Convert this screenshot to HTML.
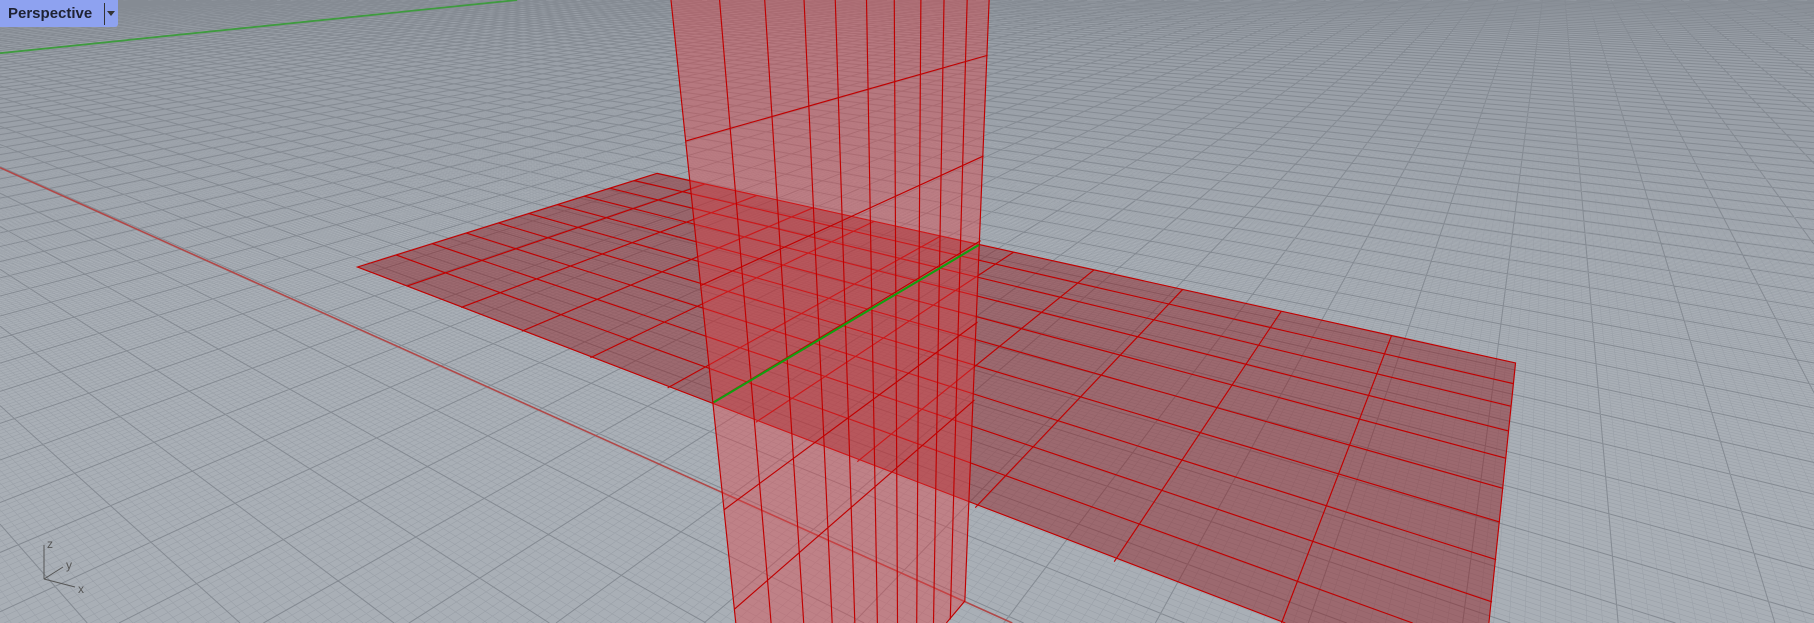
<!DOCTYPE html>
<html><head><meta charset="utf-8"><style>
html,body{margin:0;padding:0;width:1814px;height:623px;overflow:hidden;background:#aab0b7;position:relative}
svg{display:block}
#v{position:absolute;left:0;top:0}
#lab{position:absolute;left:0;top:0;width:118px;height:27px;background:#8ea2f0;border-bottom-right-radius:3px;font-family:"Liberation Sans",sans-serif;font-weight:bold;font-size:15px;color:#1e2233;line-height:27px;overflow:hidden}
#lab span{position:absolute;left:8px;top:0}
#lab i{position:absolute;left:104px;top:3px;width:1px;height:22px;background:#333}
#lab b{position:absolute;left:107px;top:11px;width:0;height:0;border-left:4px solid transparent;border-right:4px solid transparent;border-top:5px solid #333}
</style></head><body>
<svg id="v" width="1814" height="623" viewBox="0 0 1568 539" preserveAspectRatio="none" xmlns="http://www.w3.org/2000/svg" overflow="hidden">
<rect width="1568" height="539" fill="#a9afb6"/>
<path id="gmin" fill="none" stroke="#9aa0a8" stroke-width="0.5"/>
<path id="gmaj" fill="none" stroke="#858b93" stroke-width="0.9"/>
<line x1="0" y1="145" x2="875" y2="539" stroke="#b04848" stroke-width="1.4"/>
<line x1="0" y1="46" x2="447" y2="0" stroke="#3f9a3f" stroke-width="1.6"/>
<polygon points="309,231 568,150 1310,314 1287,539 1111,539" fill="rgb(140,20,25)" fill-opacity="0.45"/>
<polyline points="1111,539 309,231 568,150 1310,314 1287,539" fill="none" stroke="#c00000" stroke-width="1"/>
<path id="pgrid" fill="none" stroke="#c00000" stroke-width="1"/>
<polygon points="580,0 855,0 834,520 818,539 636,539" fill="rgb(225,60,65)" fill-opacity="0.4"/>
<polyline points="580,0 636,539" fill="none" stroke="#c00000" stroke-width="1"/>
<polyline points="855,0 834,520 818,539" fill="none" stroke="#c00000" stroke-width="1"/>
<path id="sgrid" fill="none" stroke="#c00000" stroke-width="1"/>
<line x1="617" y1="348" x2="846" y2="212" stroke="#10a010" stroke-width="1.8"/>
</svg>
<svg style="position:absolute;left:0;top:0" width="1814" height="623" xmlns="http://www.w3.org/2000/svg" overflow="hidden">
<g stroke="#555" stroke-width="1" fill="none">
<line x1="44" y1="545" x2="44" y2="579"/><line x1="44" y1="579" x2="75" y2="587"/><line x1="44" y1="579" x2="63" y2="567"/>
</g>
<g font-family="Liberation Sans,sans-serif" font-size="12" fill="#555">
<text x="47" y="548">z</text><text x="66" y="569">y</text><text x="78" y="593">x</text>
</g>
</svg>
<div id="lab"><span>Perspective</span><i></i><b></b></div>
<script>
function clipSeg(p,q,xmin,ymin,xmax,ymax){
 var t0=0,t1=1,dx=q[0]-p[0],dy=q[1]-p[1];
 var P=[-dx,dx,-dy,dy],Qv=[p[0]-xmin,xmax-p[0],p[1]-ymin,ymax-p[1]];
 for(var i=0;i<4;i++){if(P[i]==0){if(Qv[i]<0)return"";}else{var r=Qv[i]/P[i];if(P[i]<0){if(r>t1)return"";if(r>t0)t0=r;}else{if(r<t0)return"";if(r<t1)t1=r;}}}
 return"M"+(p[0]+t0*dx).toFixed(1)+" "+(p[1]+t0*dy).toFixed(1)+"L"+(p[0]+t1*dx).toFixed(1)+" "+(p[1]+t1*dy).toFixed(1);}
function scr(p,q){return clipSeg(p,q,0,0,1568,539);}
var VA=[-450,-57],VB=[1345,-92],O=[-179,64];
function ray(P,Q){var dx=Q[0]-P[0],dy=Q[1]-P[1],l=Math.hypot(dx,dy);if(l<1e-6)return"";var k=5000/l;return scr(P,[P[0]+dx*k,P[1]+dy*k]);}
var mn=[],mj=[],st=0.015,n=10;
for(var i=-700;i<=2000;i++){var t=i*st/n;if(t<=-0.995)continue;
 var Q=[(O[0]+t*VA[0])/(1+t),(O[1]+t*VA[1])/(1+t)];
 (i%n==0?mj:mn).push(ray(VB,Q));
 var R=[(O[0]+t*VB[0])/(1+t),(O[1]+t*VB[1])/(1+t)];
 (i%n==0?mj:mn).push(ray(VA,R));}
document.getElementById('gmin').setAttribute('d',mn.join(''));
document.getElementById('gmaj').setAttribute('d',mj.join(''));
var A=[309,231],B=[568,150],C=[1310,314],D=[1281,610];
var x0=A[0],y0=A[1],x1=B[0],y1=B[1],x2=C[0],y2=C[1],x3=D[0],y3=D[1];
var dx1=x1-x2,dx2=x3-x2,dx3=x0-x1+x2-x3,dy1=y1-y2,dy2=y3-y2,dy3=y0-y1+y2-y3;
var den=dx1*dy2-dx2*dy1,g=(dx3*dy2-dx2*dy3)/den,h=(dx1*dy3-dx3*dy1)/den;
var a=x1-x0+g*x1,b=x3-x0+h*x3,c=x0,d=y1-y0+g*y1,e=y3-y0+h*y3,f=y0;
function M(u,v){var w=g*u+h*v+1;return[(a*u+b*v+c)/w,(d*u+e*v+f)/w];}
var pg=[];for(var k=1;k<10;k++){pg.push(scr(M(k/10,0),M(k/10,1)));}
for(var k=1;k<11;k++){pg.push(scr(M(0,k/11),M(1,k/11)));}
document.getElementById('pgrid').setAttribute('d',pg.join(''));
// strip lines: clipped to strip region manually
var VV=[783,1950],sg=[];
function lx(y){return 580+0.104*y;} function rx(y){return 855-0.037*y;}
[622,661,695,722,749,773,796,816,836].forEach(function(x){
 // bottom y: stop at bottom edge line y=520+1.198(834-x) or 539
 var dxv=VV[0]-x,dyv=VV[1];var yb=539;
 for(var y=0;y<=539;y+=1){var xx=x+dxv*y/dyv;if(y>520+1.198*(834-xx)){yb=y;break;}}
 sg.push(scr([x,0],[x+dxv*yb/dyv,yb]));});
[122,247,348,441,527].forEach(function(y){
 var xl=lx(y),s=(y-VB[1])/(xl-VB[0]);
 // intersect with right edge x=855-0.037y
 var xr=xl;for(var xx=xl;xx<900;xx+=0.5){var yy=y+s*(xx-xl);if(xx>=rx(yy)||yy>520+1.198*(834-xx)){xr=xx;break;}}
 sg.push(scr([xl,y],[xr,y+s*(xr-xl)]));});
document.getElementById('sgrid').setAttribute('d',sg.join(''));
</script>
</body></html>
